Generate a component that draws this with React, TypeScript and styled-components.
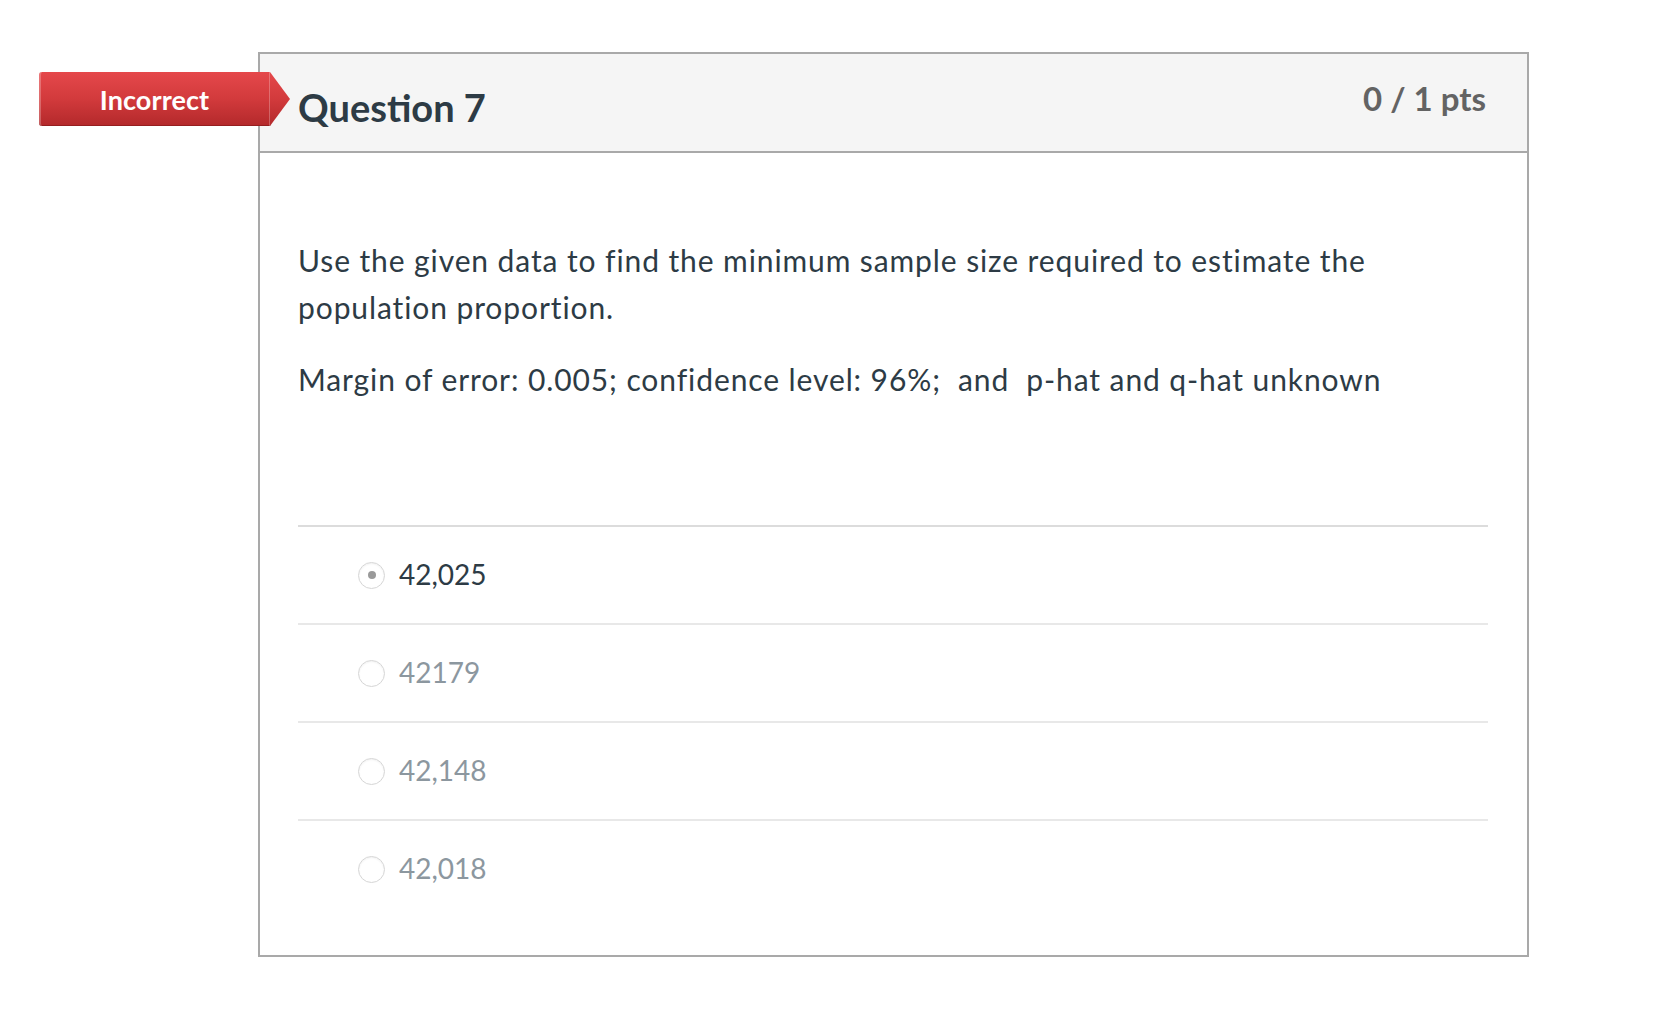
import React from 'react';
import styled, { createGlobalStyle } from 'styled-components';

const GlobalStyle = createGlobalStyle`
  html, body {
    margin: 0;
    padding: 0;
    background: #ffffff;
  }
  body {
    font-family: Lato, 'Liberation Sans', Arial, sans-serif;
    color: #2d3b45;
  }
`;

const Page = styled.main`
  padding: 52px 0 0 258px;
`;

const Card = styled.section`
  position: relative;
  box-sizing: border-box;
  width: 1271px;
  height: 905px;
  border: 2px solid #a9a9a9;
  background: #ffffff;
`;

const Badge = styled.div`
  position: absolute;
  left: -221px;
  top: 18px;
  box-sizing: border-box;
  width: 251px;
  height: 54px;
  padding-right: 20px;
  display: flex;
  align-items: center;
  justify-content: center;
  border-radius: 3px;
  background: linear-gradient(180deg, #e5484b 0%, #d23a3c 50%, #b3292b 100%);
  box-shadow: inset 3px 0 0 -1px rgba(255, 255, 255, 0.25),
    inset 0 -1px 0 rgba(120, 20, 20, 0.5);
  clip-path: polygon(
    0 0,
    calc(100% - 20px) 0,
    100% 50%,
    calc(100% - 20px) 100%,
    0 100%
  );
  color: #ffffff;
  font-size: 27px;
  font-weight: 700;
  letter-spacing: 0.1px;

  &::after {
    content: '';
    position: absolute;
    top: 0;
    bottom: 0;
    right: 20px;
    width: 1px;
    background: rgba(255, 255, 255, 0.25);
  }
`;

const Header = styled.header`
  box-sizing: border-box;
  height: 99px;
  display: flex;
  justify-content: space-between;
  align-items: flex-start;
  padding: 25px 41px 0 38px;
  background: #f5f5f5;
  border-bottom: 2px solid #a9a9a9;
`;

const Title = styled.h2`
  margin: 6px 0 0;
  font-size: 38px;
  line-height: 1.2;
  font-weight: 700;
  color: #2d3b45;
`;

const Points = styled.div`
  font-size: 33px;
  line-height: 1.2;
  font-weight: 700;
  color: #636363;
`;

const Body = styled.div`
  padding: 84px 39px 0 38px;
`;

const Paragraph = styled.p`
  margin: 0 0 25px;
  font-size: 30px;
  line-height: 47px;
  letter-spacing: 0.9px;
  color: #2d3b45;
  white-space: pre-wrap;
`;

const Answers = styled.div`
  margin-top: 122px;
`;

const AnswerRow = styled.label<{ $first?: boolean }>`
  box-sizing: border-box;
  height: 98px;
  display: flex;
  align-items: center;
  gap: 14px;
  padding-left: 60px;
  border-top: 2px solid ${(p) => (p.$first ? '#dcdcdc' : '#e8e8e8')};
`;

const Radio = styled.span<{ $checked?: boolean }>`
  box-sizing: border-box;
  width: 27px;
  height: 27px;
  border-radius: 50%;
  border: 1px solid #d6d6d6;
  background: #ffffff;
  box-shadow: inset 0 1px 2px rgba(0, 0, 0, 0.06);
  display: flex;
  align-items: center;
  justify-content: center;

  &::after {
    content: '';
    width: 8px;
    height: 8px;
    border-radius: 50%;
    background: ${(p) => (p.$checked ? '#9a9a9a' : 'transparent')};
  }
`;

const AnswerText = styled.span<{ $checked?: boolean }>`
  font-size: 28px;
  line-height: 1.2;
  color: ${(p) => (p.$checked ? '#2d3b45' : '#8c979f')};
`;

const answers = [
  { text: '42,025', checked: true },
  { text: '42179', checked: false },
  { text: '42,148', checked: false },
  { text: '42,018', checked: false },
];

const App: React.FC = () => {
  return (
    <Page>
      <GlobalStyle />
      <Card>
        <Badge>Incorrect</Badge>
        <Header>
          <Title>Question 7</Title>
          <Points>0 / 1 pts</Points>
        </Header>
        <Body>
          <Paragraph>
            Use the given data to find the minimum sample size required to
            estimate the population proportion.
          </Paragraph>
          <Paragraph>
            {'Margin of error: 0.005; confidence level: 96%;  and  p-hat and q-hat unknown'}
          </Paragraph>
          <Answers>
            {answers.map((a, i) => (
              <AnswerRow key={a.text} $first={i === 0}>
                <Radio $checked={a.checked} />
                <AnswerText $checked={a.checked}>{a.text}</AnswerText>
              </AnswerRow>
            ))}
          </Answers>
        </Body>
      </Card>
    </Page>
  );
};

export default App;
